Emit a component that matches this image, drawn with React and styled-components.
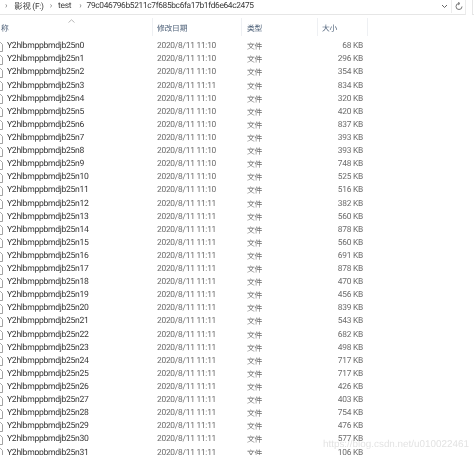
import React from 'react';
import styled, { createGlobalStyle } from 'styled-components';

const GlobalStyle = createGlobalStyle`
  html, body {
    margin: 0;
    padding: 0;
    background: #fff;
  }
`;

const Window = styled.div`
  position: relative;
  width: 474px;
  height: 455px;
  overflow: hidden;
  background: #fff;
  font-family: Roboto, 'Noto Sans CJK SC', sans-serif;
  font-size: 8.4px;
  letter-spacing: -0.25px;
  text-rendering: geometricPrecision;
  filter: blur(0.4px);
`;

const TopBar = styled.div`
  display: flex;
  height: 15px;
`;

const AddressBar = styled.div`
  display: flex;
  align-items: center;
  width: 466px;
  box-sizing: border-box;
  padding: 0 2px 2px 5px;
  border-bottom: 1px solid #e6e6e6;
  border-right: 1px solid #ececec;
  color: #3a3a3a;
`;

const Crumb = styled.span`
  margin-right: ${props => props.gap || 0}px;
  letter-spacing: ${props => props.tight ? '-0.35px' : 'inherit'};
  white-space: nowrap;
`;

const Sep = styled.span`
  margin-right: ${props => props.gap || 6}px;
  color: #777;
`;

const BarTools = styled.div`
  display: flex;
  align-items: center;
  margin-left: auto;
  gap: 3px;
`;

const ToolDivider = styled.span`
  width: 1px;
  height: 13px;
  background: #ececec;
`;

const SearchEdge = styled.div`
  flex: 1;
  margin-left: 6px;
  border-left: 1px solid #e6e6e6;
  border-bottom: 1px solid #e6e6e6;
`;

const Columns = styled.div`
  display: grid;
  grid-template-columns: 153px 89px 76px 50px;
  width: 368px;
`;

const Header = styled(Columns)`
  position: relative;
  height: 18px;
  margin-top: 3px;
  font-size: 7.8px;
  color: #4d6078;
`;

const HeaderCell = styled.div`
  display: flex;
  align-items: center;
  padding: 2px 0 0 ${props => props.pad || 4}px;
  box-sizing: border-box;
  border-right: 1px solid #eef0f3;
`;

const SortArrow = styled.svg`
  position: absolute;
  left: 68px;
  top: 1px;
  width: 7px;
  height: 4px;
`;

const List = styled.div`
  padding-top: 4.2px;
`;

const Row = styled(Columns)`
  height: 13.12px;
  line-height: 13.12px;
  color: #6e6e6e;
  white-space: nowrap;
`;

const NameCell = styled.div`
  display: flex;
  align-items: center;
  font-size: 8.6px;
  letter-spacing: -0.3px;
  color: #363636;
`;

const FileIcon = styled.svg`
  width: 8px;
  height: 10px;
  margin: 0 4px 0 -5px;
  flex: none;
`;

const DateCell = styled.div`
  padding-left: 4px;
`;

const TypeCell = styled.div`
  padding-left: 5px;
  font-size: 7.8px;
`;

const SizeCell = styled.div`
  padding-right: 5px;
  text-align: right;
`;

const Watermark = styled.div`
  position: absolute;
  right: 5px;
  bottom: 5px;
  font-family: 'Liberation Sans', sans-serif;
  font-size: 9.9px;
  letter-spacing: 0;
  color: rgba(160, 160, 160, 0.3);
`;

const files = [
  ['11:10', 68], ['11:10', 296], ['11:10', 354], ['11:11', 834],
  ['11:10', 320], ['11:10', 420], ['11:10', 837], ['11:10', 393],
  ['11:10', 393], ['11:10', 748], ['11:10', 525], ['11:10', 516],
  ['11:11', 382], ['11:11', 560], ['11:11', 878], ['11:11', 560],
  ['11:11', 691], ['11:11', 878], ['11:11', 470], ['11:11', 456],
  ['11:11', 839], ['11:11', 543], ['11:11', 682], ['11:11', 498],
  ['11:11', 717], ['11:11', 717], ['11:11', 426], ['11:11', 403],
  ['11:11', 754], ['11:11', 476], ['11:11', 577], ['11:11', 106],
];

export default function App() {
  return (
    <Window>
      <GlobalStyle />
      <TopBar>
        <AddressBar>
          <Sep gap={7}>›</Sep>
          <Crumb gap={6}>影视 (F:)</Crumb>
          <Sep>›</Sep>
          <Crumb gap={8}>test</Crumb>
          <Sep gap={5}>›</Sep>
          <Crumb tight>79c046796b5211c7f685bc6fa17b1fd6e64c2475</Crumb>
          <BarTools>
            <svg width="7" height="5" viewBox="0 0 7 5">
              <path d="M1 1l2.5 2.5L6 1" fill="none" stroke="#666" strokeWidth="1" />
            </svg>
            <ToolDivider />
            <svg width="8" height="9" viewBox="0 0 8 9">
              <path d="M4 1.5a3 3 0 1 0 3 3" fill="none" stroke="#666" strokeWidth="0.9" />
              <path d="M3 0l2 1.5L3 3" fill="none" stroke="#666" strokeWidth="0.8" />
            </svg>
          </BarTools>
        </AddressBar>
        <SearchEdge />
      </TopBar>
      <Header>
        <HeaderCell pad={1}>称</HeaderCell>
        <HeaderCell>修改日期</HeaderCell>
        <HeaderCell pad={5}>类型</HeaderCell>
        <HeaderCell>大小</HeaderCell>
        <SortArrow viewBox="0 0 7 4">
          <path d="M0.5 3.5L3.5 0.8l3 2.7" fill="none" stroke="#b0b0b0" strokeWidth="0.9" />
        </SortArrow>
      </Header>
      <List>
        {files.map(([time, size], i) => (
          <Row key={i}>
            <NameCell>
              <FileIcon viewBox="0 0 8 10">
                <path d="M0.5 0.5h5l2 2v7h-7z" fill="#fff" stroke="#8a8a8a" strokeWidth="0.8" />
              </FileIcon>
              Y2hlbmppbmdjb25n{i}
            </NameCell>
            <DateCell>2020/8/11 {time}</DateCell>
            <TypeCell>文件</TypeCell>
            <SizeCell>{size} KB</SizeCell>
          </Row>
        ))}
      </List>
      <Watermark>https://blog.csdn.net/u010022461</Watermark>
    </Window>
  );
}
